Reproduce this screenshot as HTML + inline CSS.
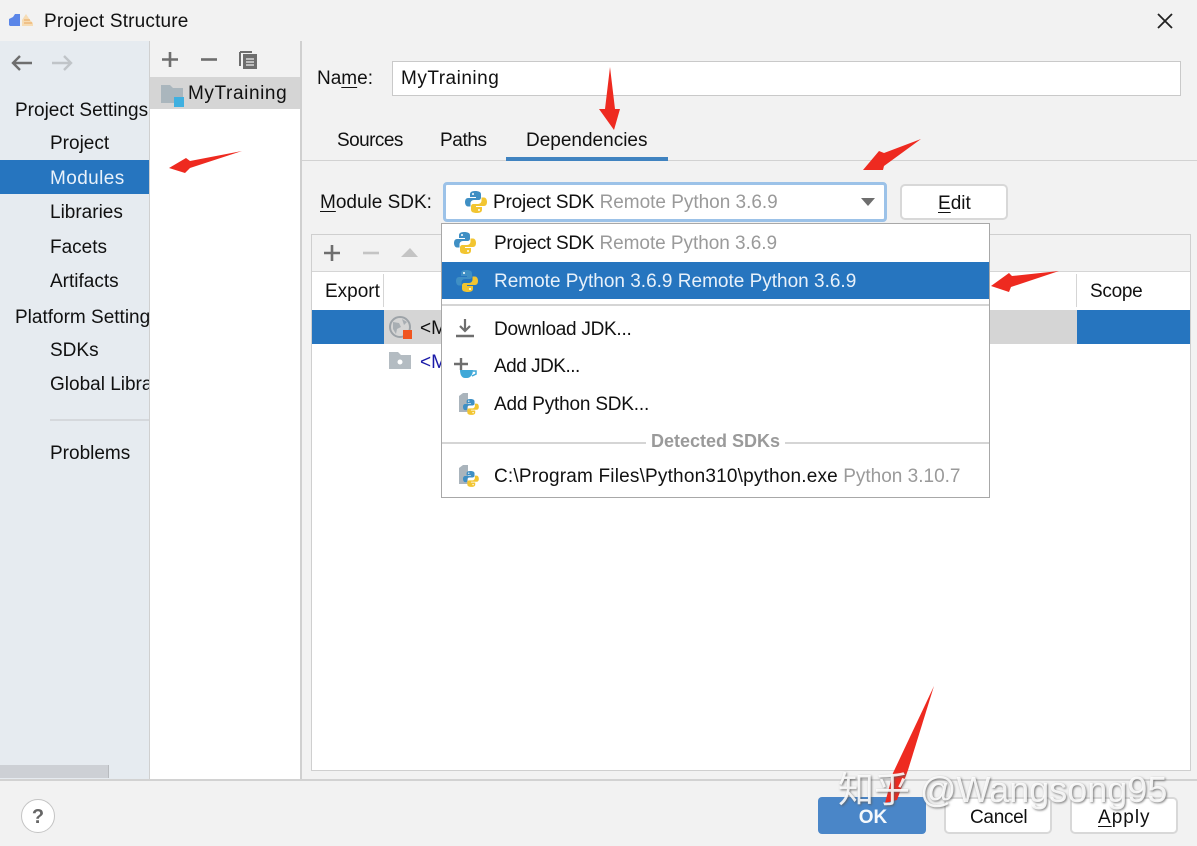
<!DOCTYPE html>
<html lang="en"><head><meta charset="utf-8"><title>Project Structure</title>
<style>
html,body{margin:0;padding:0;background:#f2f2f2}
#p{position:relative;width:1197px;height:846px;overflow:hidden;background:#f2f2f2;font-family:"Liberation Sans","Noto Sans CJK SC",sans-serif;font-size:19px;color:#111}
#p div{position:absolute}
.t{position:absolute;white-space:nowrap;line-height:24px;height:24px;margin-top:1px}
.g{color:#9a9a9a}
.w{color:#e8f1fa}
u{text-underline-offset:3px}
svg{position:absolute;overflow:visible}
.btn{background:#fff;border:2px solid #d8d8d8;border-radius:5px;box-sizing:border-box}
</style></head><body><div id="p">
<svg width="0" height="0"><defs>
<g id="py"><path d="M10 0C5.500 0 5 2 5 3.500V6h6v1H3C1 7 0 8.800 0 11s1 4.500 3 4.500h2.500v-3c0-2 1.500-3.500 3.500-3.500h4.500c1.500 0 2.500-1 2.500-2.500V3.500C16 1 14 0 10 0z" fill="#3f8fc4"/><path d="M12 22c4.500 0 5-2 5-3.500V16h-6v-1h8c2 0 3-1.800 3-4s-1-4.500-3-4.500h-2.500v3c0 2-1.500 3.500-3.500 3.500H8.500C7 13 6 14 6 15.500v3C6 21 8 22 12 22z" fill="#f2c531"/><circle cx="8" cy="3" r="1" fill="#fff"/><circle cx="14" cy="19" r="1" fill="#fff"/></g>
<g id="pk"><path d="M1 3L5 0h5v19H1z" fill="#aab4bc"/><use href="#py" transform="translate(5 6) scale(.72)"/></g>
</defs></svg>

<!-- title -->
<svg style="left:9px;top:12px" width="26" height="16"><path d="M0 7l4-2 2-3h5v12H1l-1-1z" fill="#5b86e8"/><path d="M13 8l4-6 4 6 3 3v3H13z" fill="#f6dcb4"/><path d="M15 8h6M15 11h8" stroke="#e9a65c" stroke-width="1"/></svg>
<span class="t" style="left:44px;top:9px;letter-spacing:.18px">Project Structure</span>
<svg style="left:1157px;top:13px" width="16" height="16"><path d="M1 1l14 14M15 1L1 15" stroke="#222" stroke-width="1.800"/></svg>

<!-- left sidebar -->
<div style="left:0;top:41px;width:149px;height:738px;background:#e6ebf0"></div>
<div style="left:149px;top:41px;width:1px;height:738px;background:#d0d0d0"></div>
<svg style="left:11px;top:54px" width="62" height="18"><path d="M21 9H2M9 2L2 9l7 7" fill="none" stroke="#6e6e6e" stroke-width="2.400"/><path d="M41 9h19M53 2l7 7-7 7" fill="none" stroke="#c0c4c8" stroke-width="2.400"/></svg>
<span class="t" style="left:15px;top:98px">Project Settings</span>
<span class="t" style="left:50px;top:131px">Project</span>
<div style="left:0;top:160px;width:149px;height:34px;background:#2675bf"></div>
<span class="t w" style="left:50px;top:165px;letter-spacing:.4px;margin-top:2px">Modules</span>
<span class="t" style="left:50px;top:200px">Libraries</span>
<span class="t" style="left:50px;top:234px;margin-top:2px">Facets</span>
<span class="t" style="left:50px;top:269px">Artifacts</span>
<div style="left:0;top:298px;width:149px;height:40px;overflow:hidden"><span class="t" style="left:15px;top:7px">Platform Settings</span></div>
<span class="t" style="left:50px;top:338px">SDKs</span>
<div style="left:0;top:366px;width:149px;height:36px;overflow:hidden"><span class="t" style="left:50px;top:6px">Global Libraries</span></div>
<div style="left:50px;top:419px;width:99px;height:2px;background:#d5d8dc"></div>
<span class="t" style="left:50px;top:441px">Problems</span>
<div style="left:0;top:765px;width:109px;height:13px;background:#cdd0d5;border-right:1px solid #b8bbbf;box-sizing:border-box"></div>

<!-- module column -->
<div style="left:150px;top:41px;width:150px;height:738px;background:#fff"></div>
<div style="left:150px;top:41px;width:150px;height:36px;background:#f2f2f2"></div>
<div style="left:150px;top:77px;width:150px;height:32px;background:#d5d5d5"></div>
<div style="left:300px;top:41px;width:2px;height:738px;background:#d0d0d0"></div>
<svg style="left:162px;top:50px" width="96" height="20"><path d="M8 2v15M0 9.500h16" stroke="#6e6e6e" stroke-width="2.600"/><path d="M39 9.500h16" stroke="#6e6e6e" stroke-width="2.600"/><path d="M78 2h-1v14h2V3h11V1H78z" fill="#6e6e6e"/><rect x="81" y="4" width="14" height="15" fill="#6e6e6e"/><path d="M84 9h8M84 12h8M84 15h8" stroke="#eee" stroke-width="1.300"/></svg>
<svg style="left:161px;top:85px" width="24" height="22"><path d="M0 0h9l3 3h10v15H0z" fill="#aab6bd"/><rect x="13" y="12" width="10" height="10" fill="#3fb0e0"/></svg>
<span class="t" style="left:188px;top:81px;color:#111;letter-spacing:.6px">MyTraining</span>

<!-- name -->
<span class="t" style="left:317px;top:66px">Na<u>m</u>e:</span>
<div style="left:392px;top:61px;width:789px;height:35px;background:#fff;border:1px solid #c9c9c9;box-sizing:border-box"></div>
<span class="t" style="left:401px;top:66px;letter-spacing:.5px">MyTraining</span>

<!-- tabs -->
<span class="t" style="left:337px;top:128px;letter-spacing:-.55px">Sources</span>
<span class="t" style="left:440px;top:128px;letter-spacing:-.4px">Paths</span>
<span class="t" style="left:526px;top:128px">Dependencies</span>
<div style="left:302px;top:160px;width:895px;height:1px;background:#d2d2d2"></div>
<div style="left:506px;top:157px;width:162px;height:4px;background:#4083c0"></div>

<!-- SDK -->
<span class="t" style="left:320px;top:189px;margin-top:2px"><u>M</u>odule SDK:</span>
<div style="left:443px;top:182px;width:444px;height:40px;background:#fff;border:3px solid #9cc2e8;border-radius:4px;box-sizing:border-box"></div>
<svg style="left:465px;top:191px" width="22" height="22"><use href="#py"/></svg>
<span class="t" style="left:493px;top:189px;margin-top:2px"><span style="letter-spacing:-.2px">Project SDK</span> <span class="g" style="letter-spacing:-.02px">Remote Python 3.6.9</span></span>
<svg style="left:861px;top:198px" width="14" height="8"><path d="M0 0h14L7 8z" fill="#6e6e6e"/></svg>
<div class="btn" style="left:900px;top:184px;width:108px;height:36px"></div>
<span class="t" style="left:938px;top:191px"><u>E</u>dit</span>

<!-- table -->
<div style="left:311px;top:234px;width:880px;height:537px;background:#fff;border:1px solid #cfcfcf;box-sizing:border-box"></div>
<div style="left:312px;top:235px;width:878px;height:36px;background:#f2f2f2;border-bottom:1px solid #d5d5d5"></div>
<svg style="left:324px;top:245px" width="98" height="16"><path d="M8 0v16M0 8h16" stroke="#6e6e6e" stroke-width="2.600"/><path d="M39 8h16" stroke="#c4c4c4" stroke-width="2.600"/><path d="M86 3l8 9H77z" fill="#c4c4c4"/></svg>
<span class="t" style="left:325px;top:279px">Export</span>
<div style="left:383px;top:274px;width:1px;height:33px;background:#d5d5d5"></div>
<div style="left:1076px;top:274px;width:1px;height:33px;background:#d5d5d5"></div>
<span class="t" style="left:1090px;top:279px;letter-spacing:-.3px">Scope</span>
<div style="left:312px;top:310px;width:72px;height:34px;background:#2675bf"></div>
<div style="left:384px;top:310px;width:693px;height:34px;background:#d5d5d5"></div>
<div style="left:1077px;top:310px;width:113px;height:34px;background:#2675bf"></div>
<svg style="left:389px;top:316px" width="24" height="24"><circle cx="11" cy="11" r="10" fill="#d5d5d5" stroke="#9da3a8" stroke-width="2"/><path d="M4 6l6 1 2 4-4 2-1 5-3-5zM13 3l5 3-3 3z" fill="#a8aeb3"/><rect x="14" y="14" width="9" height="9" fill="#f0551f"/></svg>
<span class="t" style="left:420px;top:316px">&lt;M</span>
<svg style="left:389px;top:352px" width="22" height="18"><path d="M0 0h9l3 3h10v14H0z" fill="#b4bcc2"/><circle cx="11" cy="10" r="2.500" fill="#fff"/></svg>
<span class="t" style="left:420px;top:350px;color:#1a1aa8">&lt;M</span>

<!-- popup -->
<div style="left:441px;top:223px;width:549px;height:275px;background:#fff;border:1px solid #a8a8a8;box-sizing:border-box"></div>
<svg style="left:454px;top:232px" width="22" height="22"><use href="#py"/></svg>
<span class="t" style="left:494px;top:231px"><span style="letter-spacing:-.3px">Project SDK</span> <span class="g" style="letter-spacing:-.05px">Remote Python 3.6.9</span></span>
<div style="left:442px;top:262px;width:547px;height:37px;background:#2675bf"></div>
<svg style="left:456px;top:270px" width="22" height="22"><use href="#py"/></svg>
<span class="t w" style="left:494px;top:269px">Remote Python 3.6.9 Remote Python 3.6.9</span>
<div style="left:442px;top:304px;width:547px;height:2px;background:#d5d5d5"></div>
<svg style="left:456px;top:319px" width="18" height="19"><path d="M9 0v11M4 7l5 5 5-5" fill="none" stroke="#6e6e6e" stroke-width="2.200"/><path d="M0 17h18" stroke="#6e6e6e" stroke-width="2.600"/></svg>
<span class="t" style="left:494px;top:317px;letter-spacing:-.27px">Download JDK...</span>
<svg style="left:454px;top:358px" width="24" height="22"><path d="M7 0v12M0 6h14" stroke="#6e6e6e" stroke-width="2.400"/><path d="M6 12h13c0 5-3 8-6 8h-2c-3 0-5-3-5-8z" fill="#3fa8d8"/><path d="M19 13h3l0 3-4 2" fill="none" stroke="#3fa8d8" stroke-width="1.500"/></svg>
<span class="t" style="left:494px;top:354px;letter-spacing:-.5px">Add JDK...</span>
<svg style="left:458px;top:393px" width="20" height="23"><use href="#pk"/></svg>
<span class="t" style="left:494px;top:392px;letter-spacing:-.2px">Add Python SDK...</span>
<div style="left:442px;top:442px;width:204px;height:2px;background:#d5d5d5"></div>
<div style="left:785px;top:442px;width:204px;height:2px;background:#d5d5d5"></div>
<span class="t" style="left:651px;top:428px;font-size:18px;font-weight:bold;color:#9a9a9a">Detected SDKs</span>
<svg style="left:458px;top:465px" width="20" height="23"><use href="#pk"/></svg>
<span class="t" style="left:494px;top:464px"><span style="letter-spacing:.19px">C:\Program Files\Python310\python.exe</span> <span class="g">Python 3.10.7</span></span>

<!-- footer -->
<div style="left:0;top:779px;width:1197px;height:2px;background:#d2d2d2"></div>
<div style="left:21px;top:799px;width:34px;height:34px;background:#fff;border:1px solid #c4c4c4;border-radius:50%;box-sizing:border-box"></div>
<span class="t" style="left:21px;top:804px;width:34px;text-align:center;font-weight:bold;color:#666;font-size:20px">?</span>
<div style="left:818px;top:797px;width:108px;height:37px;background:#4a86c8;border-radius:4px"></div>
<span class="t" style="left:873px;top:804px;transform:translateX(-50%);color:#f4f8fc;font-weight:bold;margin-top:2px">OK</span>
<div class="btn" style="left:944px;top:797px;width:108px;height:37px"></div>
<span class="t" style="left:970px;top:804px;letter-spacing:-.3px;margin-top:2px">Cancel</span>
<div class="btn" style="left:1070px;top:797px;width:108px;height:37px"></div>
<span class="t" style="left:1098px;top:804px;letter-spacing:1px;margin-top:2px"><u>A</u>pply</span>

<!-- arrows -->
<svg style="left:0;top:0" width="1197" height="846">
<g fill="#ee2a20">
<path d="M242 151L190 161l-4-3-17 10 16 5 5-5z"/>
<path d="M610 67l-5 42-6 0 15 21 6-21-5 0z"/>
<path d="M921 139L884 153l-5-2-16 19h20l1-4z"/>
<path d="M1059 271L1012 276l-3-3-18 13 18 6 2-5z"/>
<path d="M934 686L893 773l-8 30 12-3 11-30z"/>
</g>
</svg>

<!-- watermark -->
<span class="t" style="left:838px;top:770px;height:40px;line-height:40px;font-size:36px;margin-top:0;color:rgba(255,255,255,.88);text-shadow:1px 1px 2px rgba(90,90,90,.8)">知乎 @Wangsong95</span>
</div></body></html>
